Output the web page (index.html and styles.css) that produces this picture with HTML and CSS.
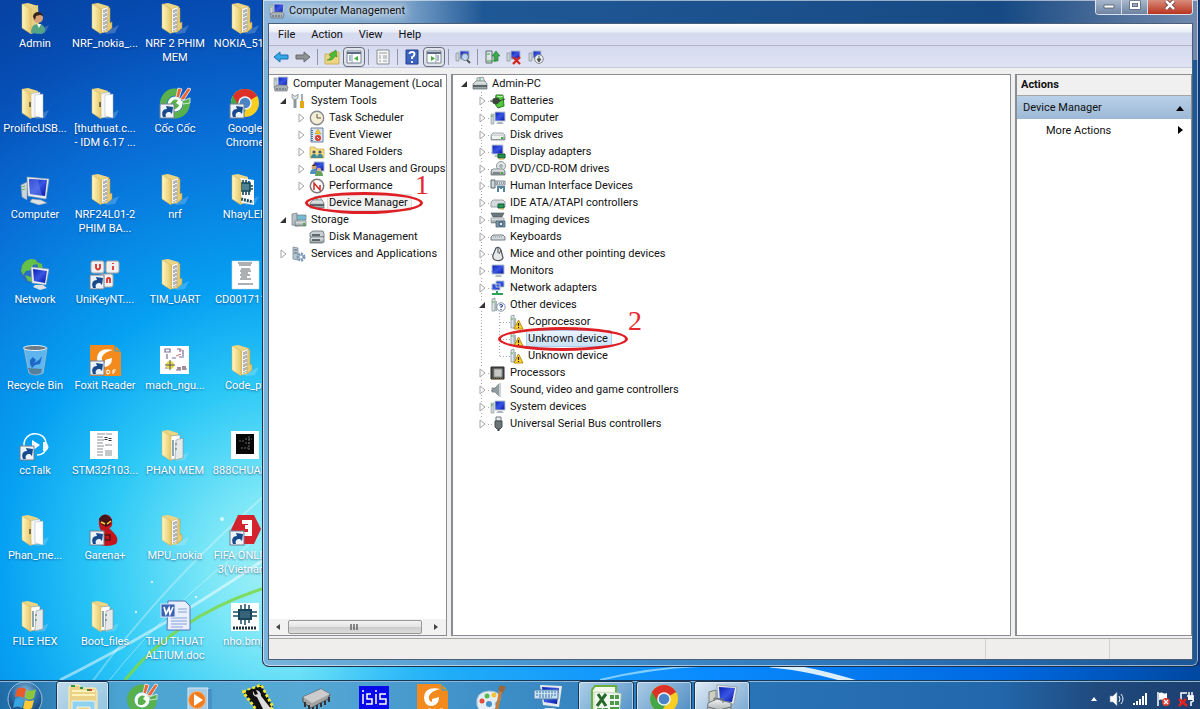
FILE: index.html
```html
<!DOCTYPE html>
<html lang="en">

<head>
  <meta charset="UTF-8">
  <meta name="viewport" content="width=device-width, initial-scale=1.0">
  <title>Computer Management</title>
  <link rel="stylesheet" href="styles.css">
</head>

<body>
  <!-- shared icons -->
  <svg class="sprite" aria-hidden="true">
    <defs>
      <linearGradient id="g-folder" x1="0" x2="1" y1="0" y2="0"><stop offset="0" stop-color="#fff7c4"/><stop offset="1" stop-color="#e6c868"/></linearGradient>
      <linearGradient id="g-screen" x1="0" x2="1" y1="0" y2="1"><stop offset="0" stop-color="#0a1fb4"/><stop offset=".5" stop-color="#3a56e4"/><stop offset="1" stop-color="#0612a0"/></linearGradient>
      <linearGradient id="g-metal" x1="0" x2="0" y1="0" y2="1"><stop offset="0" stop-color="#f2f4f4"/><stop offset="1" stop-color="#8d9698"/></linearGradient>
      <radialGradient id="g-orb" cx=".5" cy=".3" r=".7"><stop offset="0" stop-color="#8fc1e0"/><stop offset=".55" stop-color="#2a6ba6"/><stop offset="1" stop-color="#123c6c"/></radialGradient>
    </defs>

    <symbol id="folder-back" viewBox="0 0 32 32">
      <path d="M16 30l14-7-4 8-9 1z" fill="#fff" opacity=".2"/>
      <path d="M3 2l6-1 10 3v26l-7 1z" fill="#ecd582"/>
    </symbol>
    <symbol id="folder-front" viewBox="0 0 32 32">
      <path d="M3 2l9 5v25l-9-6z" fill="url(#g-folder)" stroke="#cdb160" stroke-width=".5"/>
    </symbol>
    <symbol id="folder" viewBox="0 0 32 32">
      <use href="#folder-back"/>
      <path d="M11 7l9-3 1 24-9 3z" fill="#d9bf6c"/>
      <path d="M13 7l6-2v23l-6 2z" fill="#f4f4f4"/>
      <path d="M15 8v21M17 7v21" stroke="#71797f" stroke-width="1" stroke-dasharray="3 1"/>
      <path d="M19 5l2 1v15l2-1v6l-5 4z" fill="#e6ca74" stroke="#b89a4a" stroke-width=".5"/>
      <use href="#folder-front"/>
    </symbol>
    <symbol id="folder-paper" viewBox="0 0 32 32">
      <use href="#folder-back"/>
      <path d="M10 7l11-2 1 24-10 2z" fill="#f4f6f8" stroke="#9aa" stroke-width=".5"/>
      <path d="M16 8l8-1v24l-8-2z" fill="#fff" stroke="#a8b0b8" stroke-width=".5"/>
      <use href="#folder-front"/>
      <path d="M11 15v5" stroke="#554c30" stroke-width="1.5"/>
    </symbol>
    <symbol id="folder-mixed" viewBox="0 0 32 32">
      <use href="#folder-back"/>
      <path d="M11 7l10-1v23l-10 2z" fill="#fff" stroke="#8a9296" stroke-width=".6"/>
      <path d="M17 11l7-2v20l-8 2z" fill="#e6e9e9" stroke="#8a9296" stroke-width=".6"/>
      <path d="M14 11v16M16 15h2M16 20h2" stroke="#3f6b76" stroke-width="1.2"/>
      <use href="#folder-front"/>
    </symbol>
    <symbol id="folder-user" viewBox="0 0 32 32">
      <use href="#folder-back"/>
      <path d="M10 6l9-3 1 26-8 3z" fill="#e6cf83"/>
      <use href="#folder-front"/>
      <circle cx="19" cy="16" r="5" fill="#d8a276"/>
      <path d="M14 15c0-6 9-7 10-1l-3-1-4 1-1 4z" fill="#37261c"/>
      <path d="M12 31c0-8 4-9 8-9s6 3 6 7l-3 3z" fill="#55a486"/>
      <path d="M18 22l2 4 2-4z" fill="#fff"/>
    </symbol>
    <symbol id="folder-chip" viewBox="0 0 32 32">
      <use href="#folder-back"/>
      <path d="M11 5l14 2v25l-14-3z" fill="#fff"/>
      <path d="M12 10h9v8h-9zM14 7v3M17 7v4M20 8v3M14 18v4M17 18v4M20 18v4M21 13h3M21 16h3" stroke="#134a5e" stroke-width="1.6" fill="#4c8292"/>
      <path d="M12 26l12 3" stroke="#134a5e" stroke-width="3" stroke-dasharray="2 1"/>
      <use href="#folder-front"/>
    </symbol>
    <symbol id="shortcut" viewBox="0 0 32 32">
      <rect x="1" y="17" width="14" height="14" fill="#eef3f9" stroke="#6f7f90"/>
      <path d="M4 30c-2-5 0-8 4-8l-1-3 7 1-1 7-2-2c-4 0-5 2-4 5z" fill="#174a8c"/>
    </symbol>
    <symbol id="coccoc" viewBox="0 0 32 32">
      <path d="M20 2A15 15 0 1 0 31 16h-7a8 8 0 1 1-6-7z" fill="#58b14c"/>
      <circle cx="16" cy="17" r="7.500" fill="#f6fff4"/>
      <path d="M12 19a5 5 0 0 1 7-6l-2 3 3 2a5 5 0 0 1-8 3z" fill="#58b14c"/>
      <path d="M17 10l2-9 4 1-3 9z" fill="#e8663a" stroke="#fff" stroke-width=".7"/>
      <path d="M21 12l8-11 3 1-7 11z" fill="#e8663a" stroke="#fff" stroke-width=".7"/>
      <path d="M23 14l8-3v5l-7 1z" fill="#58b14c" stroke="#fff" stroke-width=".7"/>
    </symbol>
    <symbol id="chrome" viewBox="0 0 32 32">
      <circle cx="16" cy="16" r="14" fill="#f7cf22"/>
      <path d="M16 16L3.900 9A14 14 0 0 1 28.100 9z" fill="#dd3127"/>
      <path d="M16 16L3.900 9a14 14 0 0 0 9 20.600l6-10z" fill="#44a647"/>
      <path d="M16 9h12a14 14 0 0 0-24 0l6 10a7 7 0 0 1 6-10z" fill="#dd3127"/>
      <circle cx="16" cy="16" r="6.800" fill="#f1f4f7"/>
      <circle cx="16" cy="16" r="5.300" fill="#4a83c8"/>
    </symbol>
    <symbol id="computer" viewBox="0 0 32 32">
      <path d="M2 12l6-3v18l-5-3z" fill="#ced5d8" stroke="#8d979b" stroke-width=".5"/>
      <path d="M3 14l3-1M3 17l3-1" stroke="#62c24c"/>
      <path d="M8 4l22 2-3 20-18-3z" fill="#e9edf0" stroke="#9aa4aa" stroke-width=".6"/>
      <path d="M10 6l18 1-2 16-15-2z" fill="url(#g-screen)"/>
      <path d="M10 6l9 1 4 16-12-2z" fill="#6f8bf2" opacity=".45"/>
      <path d="M13 26l9 1 6 3-8 2-9-3z" fill="#dde1e4" stroke="#8f989c" stroke-width=".5"/>
    </symbol>
    <symbol id="network" viewBox="0 0 32 32">
      <circle cx="13" cy="13" r="12" fill="#2a6dc4"/>
      <path d="M3 8c3-7 10-8 14-6l2 4-5 1-2 5-5 1-3 4-2-4zM6 17l6 2 2 5-5-1zM18 4l5 2 1 6-5-2z" fill="#63c14a"/>
      <path d="M12 9l18 2-3 16-14-2z" fill="#e9edf0" stroke="#8f999f" stroke-width=".5"/>
      <path d="M14 11l14 2-2 12-11-2z" fill="url(#g-screen)"/>
      <path d="M16 27h8l4 3-7 2-7-3z" fill="#dde1e4"/>
    </symbol>
    <symbol id="keys" viewBox="0 0 32 32">
      <rect x="2" y="3" width="13" height="12" rx="2" fill="#f0f0f0" stroke="#a7a7a7"/>
      <rect x="17" y="3" width="13" height="12" rx="2" fill="#f0f0f0" stroke="#a7a7a7"/>
      <rect x="11" y="16" width="13" height="13" rx="2" fill="#f0f0f0" stroke="#a7a7a7"/>
      <path d="M7 6v4q2 3 4 0V6M24 8v4M24 5v1M18 25v-4q2-2 3 0v4" fill="none" stroke="#d8322c" stroke-width="1.800"/>
    </symbol>
    <symbol id="doc" viewBox="0 0 32 32">
      <path d="M3 3h27v28H3z" fill="#fff" stroke="#c5d9e0" stroke-width=".6"/>
      <path d="M9 5h14M10 7h12M12 11h9M11 13h11M12 15h7M11 17h10M12 19h6M11 21h11M9 26h15" stroke="#5b6266" stroke-width="1"/>
    </symbol>
    <symbol id="doc-columns" viewBox="0 0 32 32">
      <path d="M1 2h28v28H1z" fill="#fff"/>
      <path d="M8 5h8M8 8h6M8 11h7M8 14h6M8 17h7M8 20h6M8 23h6M8 26h6M17 5h6M16 22h7M16 24h7M16 26h7" stroke="#8b9194"/>
      <path d="M17 8v4M21 9v4" stroke="#333" stroke-width="3" stroke-dasharray="1 1"/>
      <path d="M16 16h7" stroke="#888"/>
    </symbol>
    <symbol id="doc-circuit" viewBox="0 0 32 32">
      <path d="M1 2h29v28H1z" fill="#fff"/>
      <path d="M6 5h5v3H6zM8 10v5M18 5h3v3M24 6v6M13 14h4M20 13h5M6 24h4M17 26h5M25 25h3" fill="none" stroke="#7570a0" stroke-width="1.200"/>
      <path d="M21 5l3 2M17 12l5-2" stroke="#d67474"/>
      <circle cx="11" cy="21" r="4" fill="#e5d84c"/>
      <path d="M11 16v10M6 21h10" stroke="#555"/>
      <path d="M18 23h4v3h-4zM23 22h4v4h-4z" fill="#a58a9b"/>
    </symbol>
    <symbol id="doc-black" viewBox="0 0 32 32">
      <path d="M2 2h28v28H2z" fill="#fff"/>
      <path d="M7 5h18v20H7z" fill="#080808"/>
      <path d="M10 12h6M16 10h7M16 14h6M12 19h9M20 7v15" stroke="#666" stroke-dasharray="2 1"/>
    </symbol>
    <symbol id="doc-chip" viewBox="0 0 32 32">
      <path d="M2 3h28v28H2z" fill="#fff"/>
      <path d="M10 10h12v9H10z" fill="#37647a" stroke="#174459" stroke-width="2"/>
      <path d="M12 5v5M16 4v6M20 5v5M12 19v5M16 19v6M20 19v4M4 12h6M4 16h6M22 12h6M22 16h6" stroke="#1d4c60" stroke-width="1.500"/>
      <path d="M4 28h24" stroke="#1d3440" stroke-width="3" stroke-dasharray="2 1"/>
    </symbol>
    <symbol id="bin" viewBox="0 0 32 32">
      <path d="M5 4h23l-4 25q-7 4-14 0z" fill="#8cc8ef" fill-opacity=".65" stroke="#9db9ca"/>
      <ellipse cx="16" cy="4" rx="11.500" ry="2.500" fill="#6b7a84" stroke="#e7f3fa"/>
      <path d="M11 16l3-3 3 3-2 3 5-3 3-4-2 8-5 1-3 3-2-4z" fill="#1d68c8"/>
      <path d="M9 24l14 1-1 4q-6 3-11 0z" fill="#536878" opacity=".7"/>
    </symbol>
    <symbol id="foxit" viewBox="0 0 32 32">
      <path d="M1 1h24l7 7v24H1z" fill="#f38a1d"/>
      <path d="M26 1v6h6z" fill="#f38a1d" stroke="#1ca8dd"/>
      <path d="M24 6Q9 3 8 14q0 9 8 9 7-1 7-9l-7 2v3q-4-1-3-6 2-5 11-7z" fill="#fff"/>
      <path d="M12 30v-4h3v2h-3M18 26v4q3 0 3-2t-3-2M24 30v-4h3M24 28h2" fill="none" stroke="#fff"/>
    </symbol>
    <symbol id="headset" viewBox="0 0 32 32">
      <path d="M5 17C4 1 27 1 27 15v5q-2 6-9 6" fill="none" stroke="#fff" stroke-width="1.500"/>
      <path d="M24 13h3q5 5 0 9h-3z" fill="#eefaff"/>
      <path d="M13 11l8 5-8 6z" fill="#fff"/>
    </symbol>
    <symbol id="garena" viewBox="0 0 32 32">
      <path d="M10 7a6 6 0 0 1 13 0q1 6-3 7l3 3q8 7 4 13-10 4-19 0-2-7 5-12-4-5-3-11z" fill="#c5151c"/>
      <path d="M10 5q6-9 13 1l-2 5-4 2-5-3z" fill="#471317"/>
      <path d="M12 8l4 2M22 7l-4 3" stroke="#ffd83a" stroke-width="1.500"/>
      <path d="M15 21h6v5h-5v-3" fill="none" stroke="#591115" stroke-width="1.500"/>
    </symbol>
    <symbol id="fifa" viewBox="0 0 32 32">
      <path d="M9 1h16l7 14-7 15H9L2 16z" fill="#d3232f"/>
      <path d="M13 8h8v5h-5 5v7h-8" fill="none" stroke="#fff" stroke-width="4"/>
    </symbol>
    <symbol id="word" viewBox="0 0 32 32">
      <path d="M9 1h17l5 5v24H8z" fill="#eaf0fb" stroke="#5572b4"/>
      <path d="M19 9h9M19 12h9M12 18h16M12 21h16M12 24h16M12 27h12" stroke="#a7bbe6" stroke-width="1.500"/>
      <rect x="2" y="4" width="14" height="13" fill="#3b61b4" stroke="#dce7fb"/>
      <path d="M5 7l2 7 3-6 1 6 3-7" fill="none" stroke="#fff" stroke-width="1.700"/>
    </symbol>

    <!-- taskbar -->
    <symbol id="orb" viewBox="0 0 36 36">
      <circle cx="18" cy="18" r="17" fill="url(#g-orb)" stroke="#9cc4df" stroke-width="1"/>
      <path d="M10 8q4-3 9 0l-2 9q-4-3-9-1z" fill="#e85a28"/>
      <path d="M20 9q4 2 9-1l-2 9q-5 3-9 0z" fill="#8cc63e"/>
      <path d="M8 18q4-2 9 1l-2 8q-4-3-9 0z" fill="#38a4e0"/>
      <path d="M18 19q4 2 9 0l-2 8q-5 3-9 0z" fill="#fcca34"/>
    </symbol>
    <symbol id="explorer" viewBox="0 0 32 32">
      <path d="M2 4l3-2h7l2 3h14l2 3v24H2z" fill="#ecd287" stroke="#fff3bb"/>
      <path d="M5 8h23M5 12h23" stroke="#fff2bd" stroke-width="2"/>
      <path d="M4 3h4M13 5h3M20 7h3" stroke="#2d944b" stroke-width="2"/>
      <path d="M22 7h3" stroke="#d9472e" stroke-width="2"/>
      <path d="M5 32V18h23v14h-5v-8H10v8z" fill="#8fd1ef" stroke="#e3f6ff"/>
    </symbol>
    <symbol id="player" viewBox="0 0 32 32">
      <path d="M4 5h20v25H4z" fill="#a5cce6" stroke="#d9ecf7"/>
      <path d="M24 6h4v24h-4z" fill="#4b90c4"/>
      <circle cx="13" cy="17" r="8.500" fill="#ef7c1e" stroke="#fbb277"/>
      <path d="M10 11l9 6-9 6z" fill="#fff"/>
    </symbol>
    <symbol id="flash-tool" viewBox="0 0 32 32">
      <path d="M1 9l18-7 12 22-11 10z" fill="#111" stroke="#f4e62c" stroke-width="3" stroke-dasharray="3 2"/>
      <path d="M4 8l15-4 9 20-9 8z" fill="#111"/>
      <path d="M11 8q-1 5 4 6l6 12 6 4 3-3-11-14q0-5-5-6l2 4-3 1z" fill="#ddd"/>
    </symbol>
    <symbol id="ic" viewBox="0 0 32 32">
      <path d="M3 14l18-8 9 5-2 5-17 9-8-6z" fill="#a2a2a2" stroke="#555"/>
      <path d="M3 14l18-8 9 5-18 9z" fill="#ccc"/>
      <path d="M5 19v5M9 22v5M13 24v4M17 22v4M21 20v4M25 18v4M29 14v5" stroke="#333" stroke-width="2"/>
    </symbol>
    <symbol id="isis" viewBox="0 0 32 32">
      <path d="M1 3h30v29H1z" fill="#0808ec"/>
      <path d="M5 11v10M5 7v2M13 11H9v5h5v5H8M18 11v10M18 7v2M28 11h-6v5h6v5h-7" fill="none" stroke="#fff" stroke-width="1.500"/>
    </symbol>
    <symbol id="paint" viewBox="0 0 32 32">
      <path d="M3 22Q1 9 15 8q12 0 11 9-4 0-5 4 3 5-5 8Q5 31 3 22z" fill="#e4edf4" stroke="#a9c0d0"/>
      <circle cx="8" cy="18" r="2.500" fill="#e64b39"/><circle cx="13" cy="13" r="2.500" fill="#5bb850"/><circle cx="20" cy="12" r="2.500" fill="#f3c13a"/><circle cx="15" cy="21" r="3" fill="#4292cb"/>
      <path d="M27 6l-5 24" stroke="#cf7c2f" stroke-width="3"/>
      <path d="M24 7l2-5 6 2-3 6z" fill="#98683c"/>
    </symbol>
    <symbol id="osk" viewBox="0 0 32 32">
      <path d="M8 2l22 1-3 21-16-2z" fill="#e5e9ec"/>
      <path d="M10 4l17 1-2 16-13-2z" fill="url(#g-screen)"/>
      <path d="M2 7h24v9H2z" fill="#c8e0f2" stroke="#477ca8"/>
      <path d="M4 9h20M4 12h20M7 14h13" stroke="#3472a8" stroke-dasharray="2 1"/>
      <path d="M13 25h9l6 3-9 3-8-3z" fill="#dce1e4"/>
    </symbol>
    <symbol id="excel" viewBox="0 0 32 32">
      <path d="M5 3h21v27H2V7z" fill="#f4faec" stroke="#69b039" stroke-width="2"/>
      <path d="M4 9l23 1 4 1-2 21H4z" fill="#f2f8ef" stroke="#c4d8bd"/>
      <path d="M20 12h4v4h-4zM25 12h4v4h-4zM20 18h4v4h-4zM25 18h4v4h-4zM20 24h9v6h-9zM7 25h5v5H7zM13 25h5v5h-5z" fill="#4d9a48"/>
      <path d="M8 11l8 12M16 11L7 23" stroke="#27692b" stroke-width="3"/>
    </symbol>
    <symbol id="mmc" viewBox="0 0 32 32">
      <path d="M3 9l7-2v14l-7-1z" fill="#ced0c6" stroke="#7d7e79"/>
      <path d="M11 2l20 2-3 17-16-1z" fill="#e9edf0" stroke="#7a838e" stroke-width=".6"/>
      <path d="M13 4l16 1-3 14-12-1z" fill="url(#g-screen)"/>
      <path d="M2 20l9-4 14 4v9l-13 3-11-5z" fill="url(#g-metal)" stroke="#6f797e"/>
      <path d="M8 18v-3l9 1v4M2 24l11 3 12-3" fill="none" stroke="#667076"/>
    </symbol>

    <!-- 16px icons -->
    <symbol id="s-manage" viewBox="0 0 16 16">
      <path d="M1 2h3v9H1z" fill="#ccd3d5" stroke="#858f93" stroke-width=".6"/>
      <path d="M2 4h1" stroke="#48b83b"/>
      <path d="M5 1h10l-1 9H5z" fill="url(#g-screen)" stroke="#c2cbd4"/>
      <path d="M1 11l4-2h8l2 2-1 4H2z" fill="#a9b2b6" stroke="#667"  stroke-width=".6"/>
      <path d="M3 13h10" stroke="#4e595e" stroke-dasharray="2 1"/>
    </symbol>
    <symbol id="s-tools" viewBox="0 0 16 16">
      <path d="M4 6v9" stroke="#8d989d" stroke-width="3"/>
      <path d="M1 1v4l3 2 3-2V1L5 3H3z" fill="#dce2e4" stroke="#798489" stroke-width=".7"/>
      <path d="M11 1v7" stroke="#87949a" stroke-width="1.500"/>
      <path d="M11 8v7" stroke="#e6a51b" stroke-width="4"/>
    </symbol>
    <symbol id="s-clock" viewBox="0 0 16 16">
      <circle cx="8" cy="8" r="6.700" fill="#f4eed4" stroke="#868b91" stroke-width="1.400"/>
      <path d="M8 4v4h4" fill="none" stroke="#5c5444"/>
    </symbol>
    <symbol id="s-event" viewBox="0 0 16 16">
      <path d="M2 1h12v14H2z" fill="#dae5f1" stroke="#66809e"/>
      <path d="M3 3v11" stroke="#5473a0" stroke-width="2" stroke-dasharray="1 1"/>
      <path d="M9 2l3 5H6z" fill="#f6c928" stroke="#a47d16" stroke-width=".4"/>
      <circle cx="9" cy="11" r="3" fill="#d83a2e"/>
      <path d="M8 10l2 2" stroke="#fff"/>
    </symbol>
    <symbol id="s-shared" viewBox="0 0 16 16">
      <path d="M1 3h5l1 2h8v9H1z" fill="#f3dd86" stroke="#c6a23e" stroke-width=".7"/>
      <circle cx="5" cy="8" r="1.600" fill="#4a5963"/><circle cx="11" cy="8" r="1.600" fill="#4a5963"/>
      <path d="M2 14q0-4 3-4t3 4q0-4 3-4t3 4z" fill="#3e8899"/>
    </symbol>
    <symbol id="s-users" viewBox="0 0 16 16">
      <path d="M5 1h10v9H5z" fill="url(#g-screen)" stroke="#aab8cd"/>
      <circle cx="5" cy="6" r="2.500" fill="#d5a27a"/><path d="M3 5q2-4 4 0z" fill="#463529"/>
      <path d="M1 13q0-5 4-5t4 5z" fill="#4f90bd"/>
      <circle cx="10" cy="9" r="2.200" fill="#dfb086"/>
      <path d="M6 15q0-5 4-5t4 5z" fill="#64a25a"/>
    </symbol>
    <symbol id="s-perf" viewBox="0 0 16 16">
      <circle cx="8" cy="8" r="6.700" fill="#fff" stroke="#7b7979" stroke-width="1.500"/>
      <path d="M5 12V5l6 7V7" fill="none" stroke="#cf2a24" stroke-width="1.500"/>
    </symbol>
    <symbol id="s-device" viewBox="0 0 16 16">
      <path d="M5 6V2l6-1 2 5z" fill="#e1e8ea" stroke="#6d777c" stroke-width=".7"/>
      <path d="M8 2v4" stroke="#4aab55"/>
      <path d="M1 8l3-3h9l2 3v5H1z" fill="url(#g-metal)" stroke="#6d777c" stroke-width=".8"/>
      <path d="M1 10h14" stroke="#3f4a50" stroke-width="1.500"/>
    </symbol>
    <symbol id="s-storage" viewBox="0 0 16 16">
      <path d="M1 2l5-1 1 13-6-1z" fill="#b8c1c6" stroke="#6f7a80" stroke-width=".7"/>
      <path d="M6 3h9v5H6z" fill="#75bcd2" stroke="#6e7c82" stroke-width=".7"/>
      <path d="M4 9h11v5H4z" fill="url(#g-metal)" stroke="#626e74" stroke-width=".7"/>
      <path d="M12 12h2" stroke="#36b437" stroke-width="2"/>
    </symbol>
    <symbol id="s-diskmgmt" viewBox="0 0 16 16">
      <path d="M1 4l3-2h10l1 3v3H1z" fill="#c9d0d3" stroke="#616c71" stroke-width=".8"/>
      <path d="M1 9l2-1h12v5l-2 1H1z" fill="url(#g-metal)" stroke="#616c71" stroke-width=".8"/>
      <path d="M3 6h8M3 11h8" stroke="#3f4a4f" stroke-width="1.500"/>
    </symbol>
    <symbol id="s-services" viewBox="0 0 16 16">
      <path d="M2 1l5 1v12l-5-1z" fill="#b9c7d0" stroke="#6d7f8c" stroke-width=".7"/>
      <path d="M3 4h3M3 7h3" stroke="#4f6675"/>
      <circle cx="10" cy="11" r="3.300" fill="none" stroke="#7896b6" stroke-width="2.400" stroke-dasharray="2 1"/>
      <circle cx="10" cy="11" r="2" fill="#fff" stroke="#7896b6"/>
    </symbol>
    <symbol id="s-battery" viewBox="0 0 16 16">
      <path d="M6 2h7l1 11-6 2-3-4z" fill="#50c63d" stroke="#287b25"/>
      <path d="M7 3q3 2 6 0" fill="none" stroke="#c6f5b2"/>
      <path d="M0 8h5M3 6l5-1 2 3-3 3-4-1zM9 8l6-2" fill="#3b4438" stroke="#3b4438"/>
    </symbol>
    <symbol id="s-computer" viewBox="0 0 16 16">
      <path d="M1 4h3v10H1z" fill="#ccd5d6" stroke="#8b999c" stroke-width=".6"/>
      <path d="M1 6h2" stroke="#3db02f"/>
      <path d="M5 2h10v9H5z" fill="url(#g-screen)" stroke="#b8c4cb"/>
      <path d="M8 12h4l2 2H6z" fill="#adb6ba"/>
    </symbol>
    <symbol id="s-disk" viewBox="0 0 16 16">
      <path d="M1 8l2-2h10l2 2v5H1z" fill="url(#g-metal)" stroke="#899195" stroke-width=".8"/>
      <path d="M2 9h11v3H2z" fill="#f0f2f2"/>
      <path d="M11 11h2" stroke="#35b633" stroke-width="2"/>
    </symbol>
    <symbol id="s-display" viewBox="0 0 16 16">
      <path d="M2 1h11v9H2z" fill="url(#g-screen)" stroke="#c2cbd0"/>
      <path d="M5 11h5v2H4z" fill="#bcc4c8"/>
      <path d="M8 10h7v4H8z" fill="#26914b" stroke="#0a5831"/>
      <path d="M9 15h5" stroke="#d6a63e"/>
    </symbol>
    <symbol id="s-dvd" viewBox="0 0 16 16">
      <circle cx="11" cy="5" r="4.500" fill="#e1e6e8" stroke="#8d979c"/>
      <circle cx="11" cy="5" r="1.300" fill="#fff" stroke="#7d878c"/>
      <path d="M1 10l2-2h10l2 2v4H1z" fill="url(#g-metal)" stroke="#667076" stroke-width=".8"/>
      <path d="M3 12h7" stroke="#4d575c"/><path d="M11 12h2" stroke="#35b633" stroke-width="2"/>
    </symbol>
    <symbol id="s-hid" viewBox="0 0 16 16">
      <path d="M1 2h4v8H1z" fill="#cfd8da" stroke="#5a666c"/>
      <path d="M6 3h9v4H6z" fill="#d7dfe2" stroke="#7d8a91"/>
      <path d="M7 5h7" stroke="#4a565c" stroke-dasharray="1 1"/>
      <path d="M8 14V9h6v5M10 10h2" fill="none" stroke="#54859c" stroke-width="2"/>
    </symbol>
    <symbol id="s-ide" viewBox="0 0 16 16">
      <path d="M1 7l2-2h10l2 2v5H1z" fill="#d5dbdd" stroke="#899195" stroke-width=".8"/>
      <path d="M8 9h6v4H8z" fill="#28975a" stroke="#0a5831"/>
      <path d="M10 14h4" stroke="#d6a63e"/>
    </symbol>
    <symbol id="s-imaging" viewBox="0 0 16 16">
      <path d="M1 1h13l-2 4H3z" fill="#69777f" stroke="#49555b" stroke-width=".6"/>
      <path d="M1 6h13v5H1z" fill="url(#g-metal)" stroke="#747f84" stroke-width=".6"/>
      <path d="M6 9h9v6H6z" fill="#7794a8" stroke="#415a6c" stroke-width=".7"/>
      <circle cx="11" cy="12" r="2" fill="#dcf0fa" stroke="#2c485b"/>
    </symbol>
    <symbol id="s-keyboard" viewBox="0 0 16 16">
      <path d="M1 8l2-2h10l2 2v3H1z" fill="#d6dbe0" stroke="#727c85"/>
      <path d="M3 8h10" stroke="#848f99" stroke-dasharray="1 1"/>
    </symbol>
    <symbol id="s-mouse" viewBox="0 0 16 16">
      <path d="M6 2q3-2 5 2l2 8q-2 4-8 2-3-1-2-5z" fill="#e6e8e9" stroke="#4d5254" stroke-width="1.200"/>
      <path d="M8 2v5M11 4L9 8" stroke="#4d5254"/>
    </symbol>
    <symbol id="s-monitor" viewBox="0 0 16 16">
      <path d="M2 2h12v9H2z" fill="url(#g-screen)" stroke="#b7c1c8"/>
      <path d="M6 12h5l1 2H5z" fill="#b8c1c4"/>
    </symbol>
    <symbol id="s-netcard" viewBox="0 0 16 16">
      <path d="M6 1h8v6H6zM2 4h8v6H2z" fill="url(#g-screen)" stroke="#b7c5d2"/>
      <path d="M7 11v2M2 14h11" stroke="#2ba35a" stroke-width="2"/>
    </symbol>
    <symbol id="s-other" viewBox="0 0 16 16">
      <path d="M2 2l3-1v13H2z" fill="#dfe5e6" stroke="#88949a" stroke-width=".8"/>
      <path d="M5 4h2v10H5z" fill="#aab5ba"/><path d="M2 5h2" stroke="#46b53d"/>
      <circle cx="11" cy="10" r="4.200" fill="#fff" stroke="#8393ae"/>
      <path d="M9.500 8.500q1.500-2 3 0 0 1-1.500 1.500v1M11 12v1" fill="none" stroke="#344c91" stroke-width="1.200"/>
    </symbol>
    <symbol id="s-unknown" viewBox="0 0 16 16">
      <path d="M3 2l3-1v13H3z" fill="#e2e7e8" stroke="#88949a" stroke-width=".8"/>
      <path d="M6 4h2v10H6z" fill="#aab5ba"/><path d="M3 5h2" stroke="#46b53d"/>
      <path d="M10.500 6l4.500 9H6z" fill="#fbd02d" stroke="#c08c10"/>
      <path d="M10.500 9v3M10.500 13v1" stroke="#222" stroke-width="1.200"/>
    </symbol>
    <symbol id="s-cpu" viewBox="0 0 16 16">
      <path d="M1 2h13v12H1z" fill="#4b4b49" stroke="#292929"/>
      <path d="M4 4h8v8H4z" fill="#c6c8c5" stroke="#8c8d8b"/>
      <path d="M2 14h12" stroke="#b58538" stroke-dasharray="1 1"/>
    </symbol>
    <symbol id="s-sound" viewBox="0 0 16 16">
      <path d="M2 6h3l5-5v14l-5-5H2z" fill="#929c9f" stroke="#697579" stroke-width=".7"/>
      <path d="M10 1v14" stroke="#cad1d4" stroke-width="2"/>
    </symbol>
    <symbol id="s-usb" viewBox="0 0 16 16">
      <path d="M6 1h5v4H6z" fill="#eaecee" stroke="#6d777b"/>
      <path d="M5 5h7v6l-2 2H7l-2-2z" fill="#6d7478" stroke="#454d51"/>
      <path d="M8.500 13v2" stroke="#373f43" stroke-width="2"/>
    </symbol>

    <symbol id="open" viewBox="0 0 10 10"><path d="M8 2v6H2z" fill="#333"/></symbol>
    <symbol id="closed" viewBox="0 0 10 10"><path d="M3 1l5 4-5 4z" fill="#fff" stroke="#a5a5a5"/></symbol>
  </svg>

  <div class="desktop">
    <svg class="wallpaper" viewBox="0 0 1200 709" preserveAspectRatio="none" aria-hidden="true">
      <path d="M60 680Q170 625 275 552" fill="none" stroke="#fff" stroke-width="3" opacity=".5"/>
      <path d="M92 682Q170 575 285 478" fill="none" stroke="#fff" stroke-width="2" opacity=".3"/>
      <path d="M108 682Q180 590 290 515" fill="none" stroke="#fff" stroke-width="1" opacity=".4"/>
      <path d="M125 680Q180 612 275 585" fill="none" stroke="#7bd944" stroke-width="3" opacity=".85"/>
      <path d="M600 680Q650 668 700 666" fill="none" stroke="#9fdcff" stroke-width="2" opacity=".8"/>
      <path d="M770 665Q810 668 860 684" fill="none" stroke="#f2fbff" stroke-width="5" opacity=".9"/>
      <circle cx="222" cy="519" r="2" fill="#fff" opacity=".7"/><circle cx="152" cy="582" r="1" fill="#fff"/><circle cx="136" cy="612" r="1" fill="#fff"/><circle cx="196" cy="597" r="1" fill="#fff"/>
    </svg>

    <ul class="icons">
      <li><svg><use href="#folder-user"/></svg><span>Admin</span></li>
      <li><svg><use href="#folder"/></svg><span>NRF_nokia_...</span></li>
      <li><svg><use href="#folder"/></svg><span>NRF 2 PHIM<br>MEM</span></li>
      <li><svg><use href="#folder"/></svg><span>NOKIA_5110</span></li>

      <li><svg><use href="#folder-paper"/></svg><span>ProlificUSB...</span></li>
      <li><svg><use href="#folder-paper"/></svg><span>[thuthuat.c...<br>- IDM 6.17 ...</span></li>
      <li><svg><use href="#coccoc"/><use href="#shortcut"/></svg><span>Cốc Cốc</span></li>
      <li><svg><use href="#chrome"/><use href="#shortcut"/></svg><span>Google<br>Chrome</span></li>

      <li><svg><use href="#computer"/></svg><span>Computer</span></li>
      <li><svg><use href="#folder"/></svg><span>NRF24L01-2<br>PHIM BA...</span></li>
      <li><svg><use href="#folder"/></svg><span>nrf</span></li>
      <li><svg><use href="#folder-chip"/></svg><span>NhayLED</span></li>

      <li><svg><use href="#network"/></svg><span>Network</span></li>
      <li><svg><use href="#keys"/><use href="#shortcut"/></svg><span>UniKeyNT....</span></li>
      <li><svg><use href="#folder"/></svg><span>TIM_UART</span></li>
      <li><svg><use href="#doc"/></svg><span>CD001711...</span></li>

      <li><svg><use href="#bin"/></svg><span>Recycle Bin</span></li>
      <li><svg><use href="#foxit"/><use href="#shortcut"/></svg><span>Foxit Reader</span></li>
      <li><svg><use href="#doc-circuit"/></svg><span>mach_ngu...</span></li>
      <li><svg><use href="#folder"/></svg><span>Code_pt</span></li>

      <li><svg><use href="#headset"/><use href="#shortcut"/></svg><span>ccTalk</span></li>
      <li><svg><use href="#doc-columns"/></svg><span>STM32f103...</span></li>
      <li><svg><use href="#folder-mixed"/></svg><span>PHAN MEM</span></li>
      <li><svg><use href="#doc-black"/></svg><span>888CHUAN...</span></li>

      <li><svg><use href="#folder-paper"/></svg><span>Phan_me...</span></li>
      <li><svg><use href="#garena"/><use href="#shortcut"/></svg><span>Garena+</span></li>
      <li><svg><use href="#folder"/></svg><span>MPU_nokia</span></li>
      <li><svg><use href="#fifa"/><use href="#shortcut"/></svg><span>FIFA ONLINE<br>3(Vietnam)</span></li>

      <li><svg><use href="#folder-mixed"/></svg><span>FILE HEX</span></li>
      <li><svg><use href="#folder-mixed"/></svg><span>Boot_files</span></li>
      <li><svg><use href="#word"/></svg><span>THU THUAT<br>ALTIUM.doc</span></li>
      <li><svg><use href="#doc-chip"/></svg><span>nho.bmp</span></li>
    </ul>

    <div class="window">
      <div class="titlebar">
        <svg class="i16"><use href="#s-manage"/></svg>
        <span class="title">Computer Management</span>
        <div class="controls">
          <button class="min" aria-label="Minimize"><svg viewBox="0 0 12 10"><path d="M1 5h10v3H1z" fill="#fff" stroke="#4b5568" stroke-width=".8"/></svg></button>
          <button class="max" aria-label="Maximize"><svg viewBox="0 0 12 10"><path d="M2 2h8v6H2z" fill="none" stroke="#3f4a5e" stroke-width="3"/><path d="M2 2h8v6H2z" fill="none" stroke="#fff" stroke-width="2"/></svg></button>
          <button class="close" aria-label="Close"><svg viewBox="0 0 12 10"><path d="M2 1l8 8M10 1L2 9" stroke="#57302c" stroke-width="4"/><path d="M2 1l8 8M10 1L2 9" stroke="#fff" stroke-width="2.500"/></svg></button>
        </div>
      </div>

      <div class="client">
        <div class="menubar">
          <button>File</button>
          <button>Action</button>
          <button>View</button>
          <button>Help</button>
        </div>

        <div class="toolbar">
          <button aria-label="Back"><svg viewBox="0 0 16 16"><path d="M1 8l6-5v3h8v4H7v3z" fill="#35a9e8" stroke="#1c6eae"/></svg></button>
          <button aria-label="Forward"><svg viewBox="0 0 16 16"><path d="M15 8L9 3v3H1v4h8v3z" fill="#8e9294" stroke="#666b6e"/></svg></button>
          <i></i>
          <button aria-label="Up"><svg viewBox="0 0 16 16"><path d="M1 5h5l1-2h8v12H1z" fill="#ecd480" stroke="#cdb25e"/><path d="M3 11q3 0 4-4L5 6l7-5 1 7-2-1q-2 5-8 4z" fill="#4dbb36" stroke="#277c1c" stroke-width=".5"/></svg></button>
          <button class="on" aria-label="Show tree"><svg viewBox="0 0 16 16"><path d="M1 2h14v12H1z" fill="#fff" stroke="#758091"/><path d="M1 4h14" stroke="#5c6c87" stroke-width="2"/><path d="M3 7h2M3 9h2M3 11h2" stroke="#4976a8"/><path d="M6 5v9" stroke="#99a"/><path d="M12 7v5L8 9.500z" fill="#3fae36"/></svg></button>
          <i></i>
          <button aria-label="Properties"><svg viewBox="0 0 16 16"><path d="M2 1h12v14H2z" fill="#f6f6f7" stroke="#8b8d92"/><path d="M4 4h8M4 7h2M8 7h4M4 9h2M8 9h4M4 12h2M8 12h4" stroke="#979ca4"/></svg></button>
          <i></i>
          <button aria-label="Help"><svg viewBox="0 0 16 16"><path d="M2 1h12v14H2z" fill="#3b63bf" stroke="#24408c"/><path d="M5.500 5q0-2 2.500-2t2.500 2T8 8v2M8 12v2" fill="none" stroke="#fff" stroke-width="1.800"/></svg></button>
          <button class="on" aria-label="Show actions"><svg viewBox="0 0 16 16"><path d="M1 2h14v12H1z" fill="#fff" stroke="#758091"/><path d="M1 4h14" stroke="#5c6c87" stroke-width="2"/><path d="M11 7h2M11 9h2M11 11h2" stroke="#4976a8"/><path d="M10 5v9" stroke="#99a"/><path d="M5 7v5l4-2.500z" fill="#3fae36"/></svg></button>
          <i></i>
          <button aria-label="Scan"><svg viewBox="0 0 16 16"><path d="M1 4h3v8H1z" fill="#ccd5d6" stroke="#77858a" stroke-width=".6"/><path d="M5 2h9v8H5z" fill="url(#g-screen)" stroke="#aebac4"/><circle cx="10" cy="8" r="3.500" fill="#d5ebf8" fill-opacity=".85" stroke="#6f7f8c"/><path d="M12 11l3 3" stroke="#555" stroke-width="2"/></svg></button>
          <i></i>
          <button aria-label="Update driver"><svg viewBox="0 0 16 16"><path d="M2 2h6v12H2z" fill="#dce4e5" stroke="#5e6b70"/><path d="M3 5h3M3 12h9" stroke="#3f9f46"/><path d="M10 12V7H8l4-5 4 5h-2v5z" fill="#37a94b" stroke="#20752f" stroke-width=".6"/></svg></button>
          <button aria-label="Uninstall"><svg viewBox="0 0 16 16"><path d="M1 4h3v8H1z" fill="#ccd5d6" stroke="#77858a" stroke-width=".6"/><path d="M5 2h9v8H5z" fill="url(#g-screen)" stroke="#aebac4"/><path d="M7 8l7 7M14 8l-7 7" stroke="#d6221c" stroke-width="2.200"/></svg></button>
          <button aria-label="Disable"><svg viewBox="0 0 16 16"><path d="M1 4h3v8H1z" fill="#ccd5d6" stroke="#77858a" stroke-width=".6"/><path d="M5 2h8v7H5z" fill="url(#g-screen)" stroke="#aebac4"/><circle cx="11" cy="10" r="4.300" fill="#f2f2f2" stroke="#7d8386"/><path d="M11 7v4M9 10l2 3 2-3z" fill="#4c5357" stroke="#4c5357"/></svg></button>
        </div>

        <div class="panes">
          <div class="pane nav">
            <div class="tree">
              <div class="row root"><svg class="i16"><use href="#s-manage"/></svg><span>Computer Management (Local</span></div>
              <ul class="level1">
                <li>
                  <div class="row"><button aria-label="Collapse"><svg><use href="#open"/></svg></button><svg class="i16"><use href="#s-tools"/></svg><span>System Tools</span></div>
                  <ul>
                    <li class="row"><button aria-label="Expand"><svg><use href="#closed"/></svg></button><svg class="i16"><use href="#s-clock"/></svg><span>Task Scheduler</span></li>
                    <li class="row"><button aria-label="Expand"><svg><use href="#closed"/></svg></button><svg class="i16"><use href="#s-event"/></svg><span>Event Viewer</span></li>
                    <li class="row"><button aria-label="Expand"><svg><use href="#closed"/></svg></button><svg class="i16"><use href="#s-shared"/></svg><span>Shared Folders</span></li>
                    <li class="row"><button aria-label="Expand"><svg><use href="#closed"/></svg></button><svg class="i16"><use href="#s-users"/></svg><span>Local Users and Groups</span></li>
                    <li class="row"><button aria-label="Expand"><svg><use href="#closed"/></svg></button><svg class="i16"><use href="#s-perf"/></svg><span>Performance</span></li>
                    <li class="row leaf"><svg class="i16"><use href="#s-device"/></svg><span class="current">Device Manager</span><b class="ring ring-one"></b><b class="mark mark-one">1</b></li>
                  </ul>
                </li>
                <li>
                  <div class="row"><button aria-label="Collapse"><svg><use href="#open"/></svg></button><svg class="i16"><use href="#s-storage"/></svg><span>Storage</span></div>
                  <ul>
                    <li class="row leaf"><svg class="i16"><use href="#s-diskmgmt"/></svg><span>Disk Management</span></li>
                  </ul>
                </li>
                <li class="row"><button aria-label="Expand"><svg><use href="#closed"/></svg></button><svg class="i16"><use href="#s-services"/></svg><span>Services and Applications</span></li>
              </ul>
            </div>
            <div class="scrollbar">
              <button aria-label="Scroll left"><svg viewBox="0 0 10 10"><path d="M7 2v6L3 5z" fill="#444"/></svg></button>
              <span class="thumb"><svg viewBox="0 0 10 8"><path d="M1 1v6M4 1v6M7 1v6" stroke="#666" stroke-width="1.500"/></svg></span>
              <button aria-label="Scroll right"><svg viewBox="0 0 10 10"><path d="M3 2v6l4-3z" fill="#444"/></svg></button>
            </div>
          </div>

          <div class="pane devices">
            <div class="tree">
              <div class="row"><button aria-label="Collapse"><svg><use href="#open"/></svg></button><svg class="i16"><use href="#s-device"/></svg><span>Admin-PC</span></div>
              <ul class="lines">
                <li class="row"><button aria-label="Expand"><svg><use href="#closed"/></svg></button><svg class="i16"><use href="#s-battery"/></svg><span>Batteries</span></li>
                <li class="row"><button aria-label="Expand"><svg><use href="#closed"/></svg></button><svg class="i16"><use href="#s-computer"/></svg><span>Computer</span></li>
                <li class="row"><button aria-label="Expand"><svg><use href="#closed"/></svg></button><svg class="i16"><use href="#s-disk"/></svg><span>Disk drives</span></li>
                <li class="row"><button aria-label="Expand"><svg><use href="#closed"/></svg></button><svg class="i16"><use href="#s-display"/></svg><span>Display adapters</span></li>
                <li class="row"><button aria-label="Expand"><svg><use href="#closed"/></svg></button><svg class="i16"><use href="#s-dvd"/></svg><span>DVD/CD-ROM drives</span></li>
                <li class="row"><button aria-label="Expand"><svg><use href="#closed"/></svg></button><svg class="i16"><use href="#s-hid"/></svg><span>Human Interface Devices</span></li>
                <li class="row"><button aria-label="Expand"><svg><use href="#closed"/></svg></button><svg class="i16"><use href="#s-ide"/></svg><span>IDE ATA/ATAPI controllers</span></li>
                <li class="row"><button aria-label="Expand"><svg><use href="#closed"/></svg></button><svg class="i16"><use href="#s-imaging"/></svg><span>Imaging devices</span></li>
                <li class="row"><button aria-label="Expand"><svg><use href="#closed"/></svg></button><svg class="i16"><use href="#s-keyboard"/></svg><span>Keyboards</span></li>
                <li class="row"><button aria-label="Expand"><svg><use href="#closed"/></svg></button><svg class="i16"><use href="#s-mouse"/></svg><span>Mice and other pointing devices</span></li>
                <li class="row"><button aria-label="Expand"><svg><use href="#closed"/></svg></button><svg class="i16"><use href="#s-monitor"/></svg><span>Monitors</span></li>
                <li class="row"><button aria-label="Expand"><svg><use href="#closed"/></svg></button><svg class="i16"><use href="#s-netcard"/></svg><span>Network adapters</span></li>
                <li>
                  <div class="row"><button aria-label="Collapse"><svg><use href="#open"/></svg></button><svg class="i16"><use href="#s-other"/></svg><span>Other devices</span></div>
                  <ul class="lines">
                    <li class="row leaf"><svg class="i16"><use href="#s-unknown"/></svg><span>Coprocessor</span></li>
                    <li class="row leaf"><svg class="i16"><use href="#s-unknown"/></svg><span class="selected">Unknown device</span><b class="ring ring-two"></b><b class="mark mark-two">2</b></li>
                    <li class="row leaf"><svg class="i16"><use href="#s-unknown"/></svg><span>Unknown device</span></li>
                  </ul>
                </li>
                <li class="row"><button aria-label="Expand"><svg><use href="#closed"/></svg></button><svg class="i16"><use href="#s-cpu"/></svg><span>Processors</span></li>
                <li class="row"><button aria-label="Expand"><svg><use href="#closed"/></svg></button><svg class="i16"><use href="#s-sound"/></svg><span>Sound, video and game controllers</span></li>
                <li class="row"><button aria-label="Expand"><svg><use href="#closed"/></svg></button><svg class="i16"><use href="#s-computer"/></svg><span>System devices</span></li>
                <li class="row"><button aria-label="Expand"><svg><use href="#closed"/></svg></button><svg class="i16"><use href="#s-usb"/></svg><span>Universal Serial Bus controllers</span></li>
              </ul>
            </div>
          </div>

          <div class="pane actions">
            <h2>Actions</h2>
            <button class="group">Device Manager<svg viewBox="0 0 10 10"><path d="M1 8l4-5 4 5z"/></svg></button>
            <button class="more">More Actions<svg viewBox="0 0 10 10"><path d="M3 1l5 4-5 4z"/></svg></button>
          </div>
        </div>

        <div class="statusbar"><span></span><span></span><span></span></div>
      </div>
    </div>
  </div>

  <div class="taskbar">
    <button class="start" aria-label="Start"><svg><use href="#orb"/></svg></button>
    <button class="task open first" aria-label="Explorer"><svg><use href="#explorer"/></svg></button>
    <button class="task" aria-label="Coc Coc"><svg><use href="#coccoc"/></svg></button>
    <button class="task" aria-label="Media Player"><svg><use href="#player"/></svg></button>
    <button class="task" aria-label="Flash tool"><svg><use href="#flash-tool"/></svg></button>
    <button class="task" aria-label="Programmer"><svg><use href="#ic"/></svg></button>
    <button class="task" aria-label="ISIS"><svg><use href="#isis"/></svg></button>
    <button class="task" aria-label="Foxit Reader"><svg><use href="#foxit"/></svg></button>
    <button class="task" aria-label="Paint"><svg><use href="#paint"/></svg></button>
    <button class="task" aria-label="On-screen keyboard"><svg><use href="#osk"/></svg></button>
    <button class="task open" aria-label="Excel"><svg><use href="#excel"/></svg></button>
    <button class="task open" aria-label="Chrome"><svg><use href="#chrome"/></svg></button>
    <button class="task open active" aria-label="Computer Management"><svg><use href="#mmc"/></svg></button>
    <div class="tray">
      <svg viewBox="0 0 16 16"><path d="M5 10l3-4 3 4z" fill="#fff"/></svg>
      <svg viewBox="0 0 16 16"><path d="M1 5h3l4-4v14l-4-4H1z" fill="#fff" stroke="#788ba2" stroke-width=".6"/><path d="M10 5q2 3 0 6M12 3q4 5 0 10" fill="none" stroke="#e8eef5"/></svg>
      <svg viewBox="0 0 16 16"><path d="M2 14v-2M5 14v-4M8 14V8M11 14V5M14 14V2" stroke="#fff" stroke-width="2"/></svg>
      <svg viewBox="0 0 16 16"><path d="M3 1v14" stroke="#fff" stroke-width="1.500"/><path d="M4 2q3-1 4 0t4 0v7q-2 1-4 0t-4 0z" fill="#fff"/><circle cx="11" cy="11" r="4" fill="#dc3e32"/><path d="M9 9l4 4M13 9l-4 4" stroke="#fff" stroke-width="1.300"/></svg>
      <svg viewBox="0 0 16 16"><path d="M3 13V2h6M11 1v4M14 1v4M9 5h7v2q0 4-3 4v4" fill="none" stroke="#fff" stroke-width="1.500"/><path d="M10 5h5v4h-5z" fill="#fff"/><path d="M1 8l8 7M8 8l-7 7" stroke="#e1221c" stroke-width="2.500"/></svg>
    </div>
  </div>
</body>

</html>
```
FILE: styles.css
```css
* {
  box-sizing: border-box;
  padding: 0;
  margin: 0;
}

body {
  display: flex;
  flex-direction: column;
  height: 100vh;
  overflow: hidden;
  font: 11px/17px Roboto, "Noto Sans", sans-serif;
  color: #111;
}

ul {
  list-style: none;
}

button {
  border: 0;
  background: none;
  font: inherit;
  color: inherit;
}

svg {
  display: block;
  flex: none;
}

.sprite {
  position: absolute;
  width: 0;
  height: 0;
}

.i16 {
  width: 16px;
  height: 16px;
}

/* desktop */
.desktop {
  position: relative;
  flex: 1;
  min-height: 0;
  background:
    linear-gradient(90deg, transparent 25%, #1ea8f8 40%, #0a8cff 58%, #0068e0 84%, #0048a0) bottom / 100% 14px no-repeat,
    radial-gradient(circle at 290px 570px, #a8f2f6 0, #7ce7f7 80px, #2cc8f6 190px, #06a0f2 290px, #0870d8 440px, #064db4 560px, #053c98 680px);
}

.wallpaper {
  position: absolute;
  width: 100%;
  height: 100vh;
}

.icons {
  position: relative;
  display: grid;
  grid-template-columns: repeat(4, 70px);
  grid-auto-rows: 1fr;
  height: calc(100vh - 26px);
  color: #fff;
  line-height: 14px;
  text-align: center;
  text-shadow: 0 1px 2px rgba(0, 40, 90, .6);
}

.icons li {
  display: flex;
  flex-direction: column;
  align-items: center;
  gap: 3px;
  padding-top: 2px;
  white-space: nowrap;
}

.icons svg {
  width: 32px;
  height: 32px;
}

/* window */
.window {
  position: absolute;
  top: 0;
  right: 1px;
  bottom: 13px;
  left: 262px;
  display: flex;
  flex-direction: column;
  padding: 0 5px 6px;
  border: 1px solid #1c3148;
  border-top: 0;
  border-radius: 0 0 7px 7px;
  background: linear-gradient(90deg, #8fb8dc 0, #7ea5cc 140px, #1f5896 220px, #174a84 740px, #4d6e9a 850px, #7189ad 100%) top / 100% 60px no-repeat, linear-gradient(90deg, #78b4dc, #4c9ad2 25%, #2e78bc 60%, #1c5796);
  box-shadow: inset 0 0 0 1px rgba(255, 255, 255, .55);
}

.titlebar {
  display: flex;
  align-items: center;
  height: 23px;
  padding: 0 0 2px 1px;
}

.title {
  margin-left: 4px;
  text-shadow: 0 0 6px #fff, 0 0 10px #fff, 0 0 16px #fff;
}

.controls {
  display: flex;
  align-self: flex-start;
  height: 15px;
  margin-left: auto;
  border: 1px solid #dbe4ee;
  border-top: 0;
  border-radius: 0 0 4px 4px;
  overflow: hidden;
}

.controls button {
  display: flex;
  justify-content: center;
  width: 26px;
  border-right: 1px solid #d5deea;
  background: linear-gradient(#a9b8cd, #6e83a2);
}

.controls .close {
  width: 44px;
  border: 0;
  background: linear-gradient(#d98c7c, #b8341e);
}

.controls svg {
  width: 12px;
  height: 10px;
}

.client {
  display: flex;
  flex: 1;
  flex-direction: column;
  min-height: 0;
  border: 1px solid #4b6078;
  background: #f0f0f0;
}

.menubar {
  display: flex;
  height: 22px;
  padding-left: 1px;
  border-bottom: 1px solid #b0b4c4;
  background: linear-gradient(#fff 0, #e9edf7 8px, #d5daee 9px, #d8dcf0 100%);
}

.menubar button {
  padding: 2px 8px;
}

.toolbar {
  display: flex;
  align-items: center;
  height: 22px;
  padding-left: 1px;
  border-bottom: 1px solid #c5cbdc;
  background: linear-gradient(#d5daee, #dfe3f4);
}

.toolbar button {
  width: 22px;
  height: 20px;
  padding: 2px 3px;
  border-radius: 4px;
}

.toolbar .on {
  border: 1px solid #676d7a;
  padding: 1px 2px;
  background: #e0e3ec;
}

.toolbar button svg {
  width: 16px;
  height: 16px;
}

.toolbar i {
  width: 1px;
  height: 16px;
  margin: 0 3px;
  background: #8f95a5;
}

.panes {
  display: grid;
  flex: 1;
  grid-template-columns: 178px minmax(0, 1fr) 177px;
  gap: 4px;
  min-height: 0;
  padding: 6px 0 2px;
}

.pane {
  display: flex;
  flex-direction: column;
  border: 1px solid #8a8d92;
  border-left-width: 2px;
  background: #fff;
  overflow: hidden;
}

.nav {
  border-left: 0;
}

.tree {
  flex: 1;
  white-space: nowrap;
}

.devices .tree {
  padding-left: 6px;
}

.tree ul {
  padding-left: 18px;
}

.tree .level1 {
  padding-left: 9px;
}

.row {
  position: relative;
  display: flex;
  align-items: center;
  height: 17px;
}

.row button {
  width: 10px;
  height: 10px;
  margin-right: 3px;
  background: #fff;
}

.row button svg {
  width: 10px;
  height: 10px;
}

.row .i16 {
  margin-right: 2px;
}

.row span {
  padding: 0 2px;
}

.leaf {
  padding-left: 13px;
}

.nav .root {
  padding-left: 4px;
}

/* dotted connectors */
.tree .lines {
  background: repeating-linear-gradient(#aaa 0 1px, #fff 1px 3px) 22px 0 / 1px calc(100% - 8px) no-repeat;
}

.lines > .row {
  background: repeating-linear-gradient(90deg, #aaa 0 1px, #fff 1px 3px) 5px 9px / 10px 1px no-repeat;
}

.row .current,
.row .selected {
  padding: 0 3px 0 1px;
  border: 1px solid #ddd;
  border-radius: 2px;
  background: #f2f2f2;
  line-height: 15px;
}

.row .selected {
  border-color: #a9d0f2;
  background: linear-gradient(#eaf4fd, #c9e1f8);
}

.ring {
  position: absolute;
  height: 22px;
  border: 3px solid #df1f26;
  border-radius: 50%;
}

.ring-one {
  left: 9px;
  width: 118px;
}

.ring-two {
  left: 3px;
  width: 130px;
  height: 24px;
}

.mark {
  position: absolute;
  bottom: 12px;
  color: #e8282e;
  font: 28px/28px "Liberation Serif", serif;
}

.mark-one {
  left: 119px;
}

.mark-two {
  left: 133px;
}

.scrollbar {
  display: flex;
  align-items: center;
  height: 16px;
  background: #f2f2f2;
}

.scrollbar button {
  width: 19px;
  padding-left: 4px;
}

.scrollbar button svg {
  width: 10px;
  height: 10px;
}

.thumb {
  display: flex;
  flex: 1;
  align-items: center;
  justify-content: center;
  height: 14px;
  margin-right: 5px;
  border: 1px solid #979797;
  border-radius: 2px;
  background: linear-gradient(#f4f4f4 0, #e4e4e4 50%, #cbcccd 51%, #dcdcdc);
}

.thumb svg {
  width: 10px;
  height: 8px;
}

.actions h2 {
  height: 21px;
  padding-left: 4px;
  border-bottom: 1px solid #a5a5a5;
  background: #f0f0f0;
  font-size: 11px;
  line-height: 20px;
}

.actions button {
  display: flex;
  align-items: center;
  justify-content: space-between;
  height: 22px;
  padding: 0 6px;
  text-align: left;
}

.actions .group {
  height: 23px;
  background: linear-gradient(#b9d0e8, #9cb8d6);
}

.actions .more {
  padding-left: 29px;
}

.actions svg {
  width: 10px;
  height: 10px;
}

.statusbar {
  display: flex;
  height: 21px;
  border-top: 1px solid #a8a8a8;
  background: #f0eded;
}

.statusbar span {
  width: 82px;
}

.statusbar span:first-child {
  flex: 1;
}

.statusbar span:nth-child(2) {
  width: 125px;
  border: 1px solid #d2d0d0;
  border-width: 0 1px;
}

/* taskbar */
.taskbar {
  position: relative;
  display: flex;
  height: 29px;
  border-top: 1px solid #173a5c;
  background: linear-gradient(90deg, #1e6ba8 0, #4aa3d0 120px, #56a9d5 300px, #3f90c8 480px, #2a76b8 700px, #2267ab 1000px, #20497c 1100px, #1c3f70 100%);
  box-shadow: inset 0 1px #8cb9d8;
  overflow: hidden;
}

.start {
  width: 55px;
  padding-left: 7px;
}

.start svg {
  width: 36px;
  height: 36px;
}

.taskbar button {
  height: 36px;
}

.task {
  display: flex;
  flex: none;
  align-items: center;
  justify-content: center;
  width: 58px;
}

.task svg {
  width: 32px;
  height: 32px;
}

.taskbar .open {
  width: 56px;
  margin: 0 1px;
  border: 1px solid #15395c;
  border-radius: 3px 3px 0 0;
  background: linear-gradient(135deg, rgba(255, 255, 255, .6), rgba(255, 255, 255, .15));
  box-shadow: inset 0 0 0 1px rgba(255, 255, 255, .5);
}

.taskbar .active {
  background: linear-gradient(135deg, rgba(255, 255, 255, .85), rgba(255, 255, 255, .35));
}

.taskbar .first {
  width: 53px;
  margin-right: 4px;
  background: linear-gradient(135deg, rgba(255, 255, 255, .7), rgba(255, 255, 255, .4));
}

.tray {
  display: flex;
  align-items: center;
  gap: 7px;
  height: 36px;
  margin-left: auto;
  padding-right: 6px;
}

.tray svg {
  width: 16px;
  height: 16px;
}
```
